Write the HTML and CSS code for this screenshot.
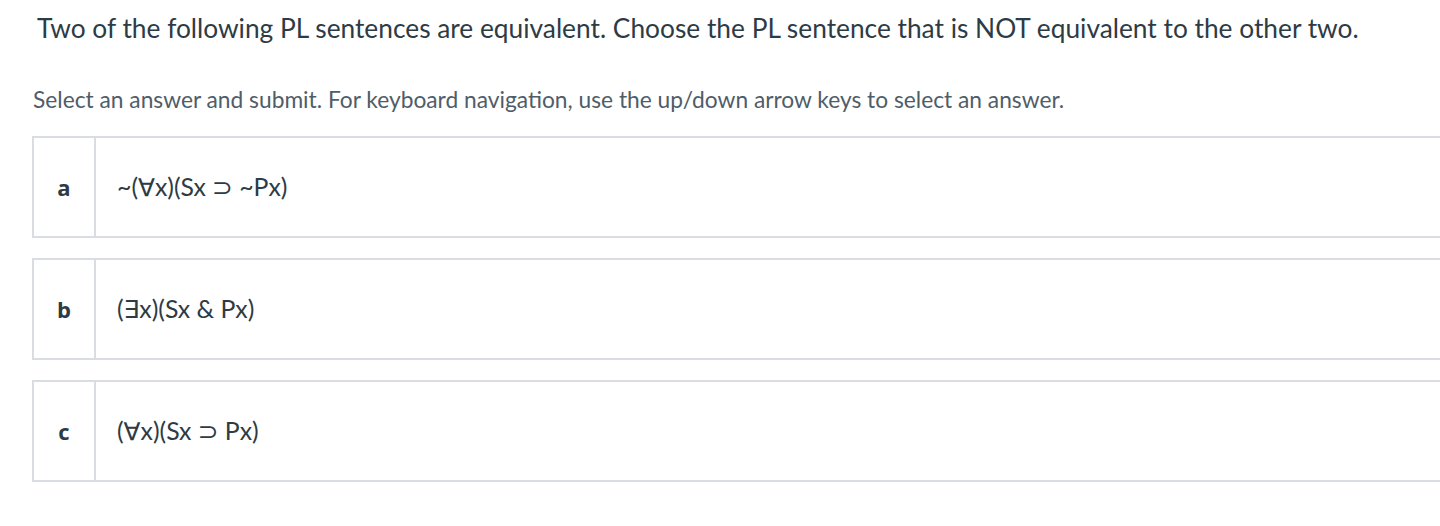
FILE: index.html
```html
<!DOCTYPE html>
<html>
<head>
<meta charset="utf-8">
<link rel="stylesheet" href="styles.css">
</head>
<body>
<div class="page">
  <h1 class="question">Two of the following PL sentences are equivalent. Choose the PL sentence that is NOT equivalent to the other two.</h1>
  <p class="instructions">Select an answer and submit. For keyboard navigation, use the up/down arrow keys to select an answer.</p>
  <ul class="answers">
    <li class="answer"><span class="letter">a</span><span class="text">~(∀x)(Sx ⊃ ~Px)</span></li>
    <li class="answer"><span class="letter">b</span><span class="text">(∃x)(Sx &amp; Px)</span></li>
    <li class="answer"><span class="letter">c</span><span class="text">(∀x)(Sx ⊃ Px)</span></li>
  </ul>
</div>
</body>
</html>
```
FILE: styles.css
```css
html, body {
  margin: 0;
  padding: 0;
  background: #ffffff;
}
body {
  font-family: Lato, "Open Sans", "DejaVu Sans", sans-serif;
  color: #2d3b45;
  width: 1440px;
  height: 526px;
  overflow: hidden;
}
.page {
  padding: 11px 0 0 32px;
}
.question {
  margin: 0 0 0 5px;
  font-size: 26.3px;
  font-weight: 400;
  line-height: 34px;
  color: #2d3b45;
  white-space: nowrap;
}
.instructions {
  margin: 40px 0 0 1px;
  font-size: 22.75px;
  line-height: 30px;
  color: #4f5d69;
  white-space: nowrap;
}
.answers {
  list-style: none;
  margin: 21px 0 0 0;
  padding: 0;
  display: flex;
  flex-direction: column;
  gap: 20px;
}
.answer {
  display: flex;
  align-items: stretch;
  height: 98px;
  width: 1420px;
  border: 2px solid #d9dde2;
}
.letter {
  width: 60px;
  border-right: 2px solid #d9dde2;
  display: flex;
  align-items: center;
  justify-content: center;
  font-family: "Open Sans", Lato, sans-serif;
  font-weight: 700;
  font-size: 22px;
  color: #2d3b45;
}
.text {
  display: flex;
  align-items: center;
  padding-left: 21px;
  font-size: 24.8px;
  color: #2d3b45;
}
```
